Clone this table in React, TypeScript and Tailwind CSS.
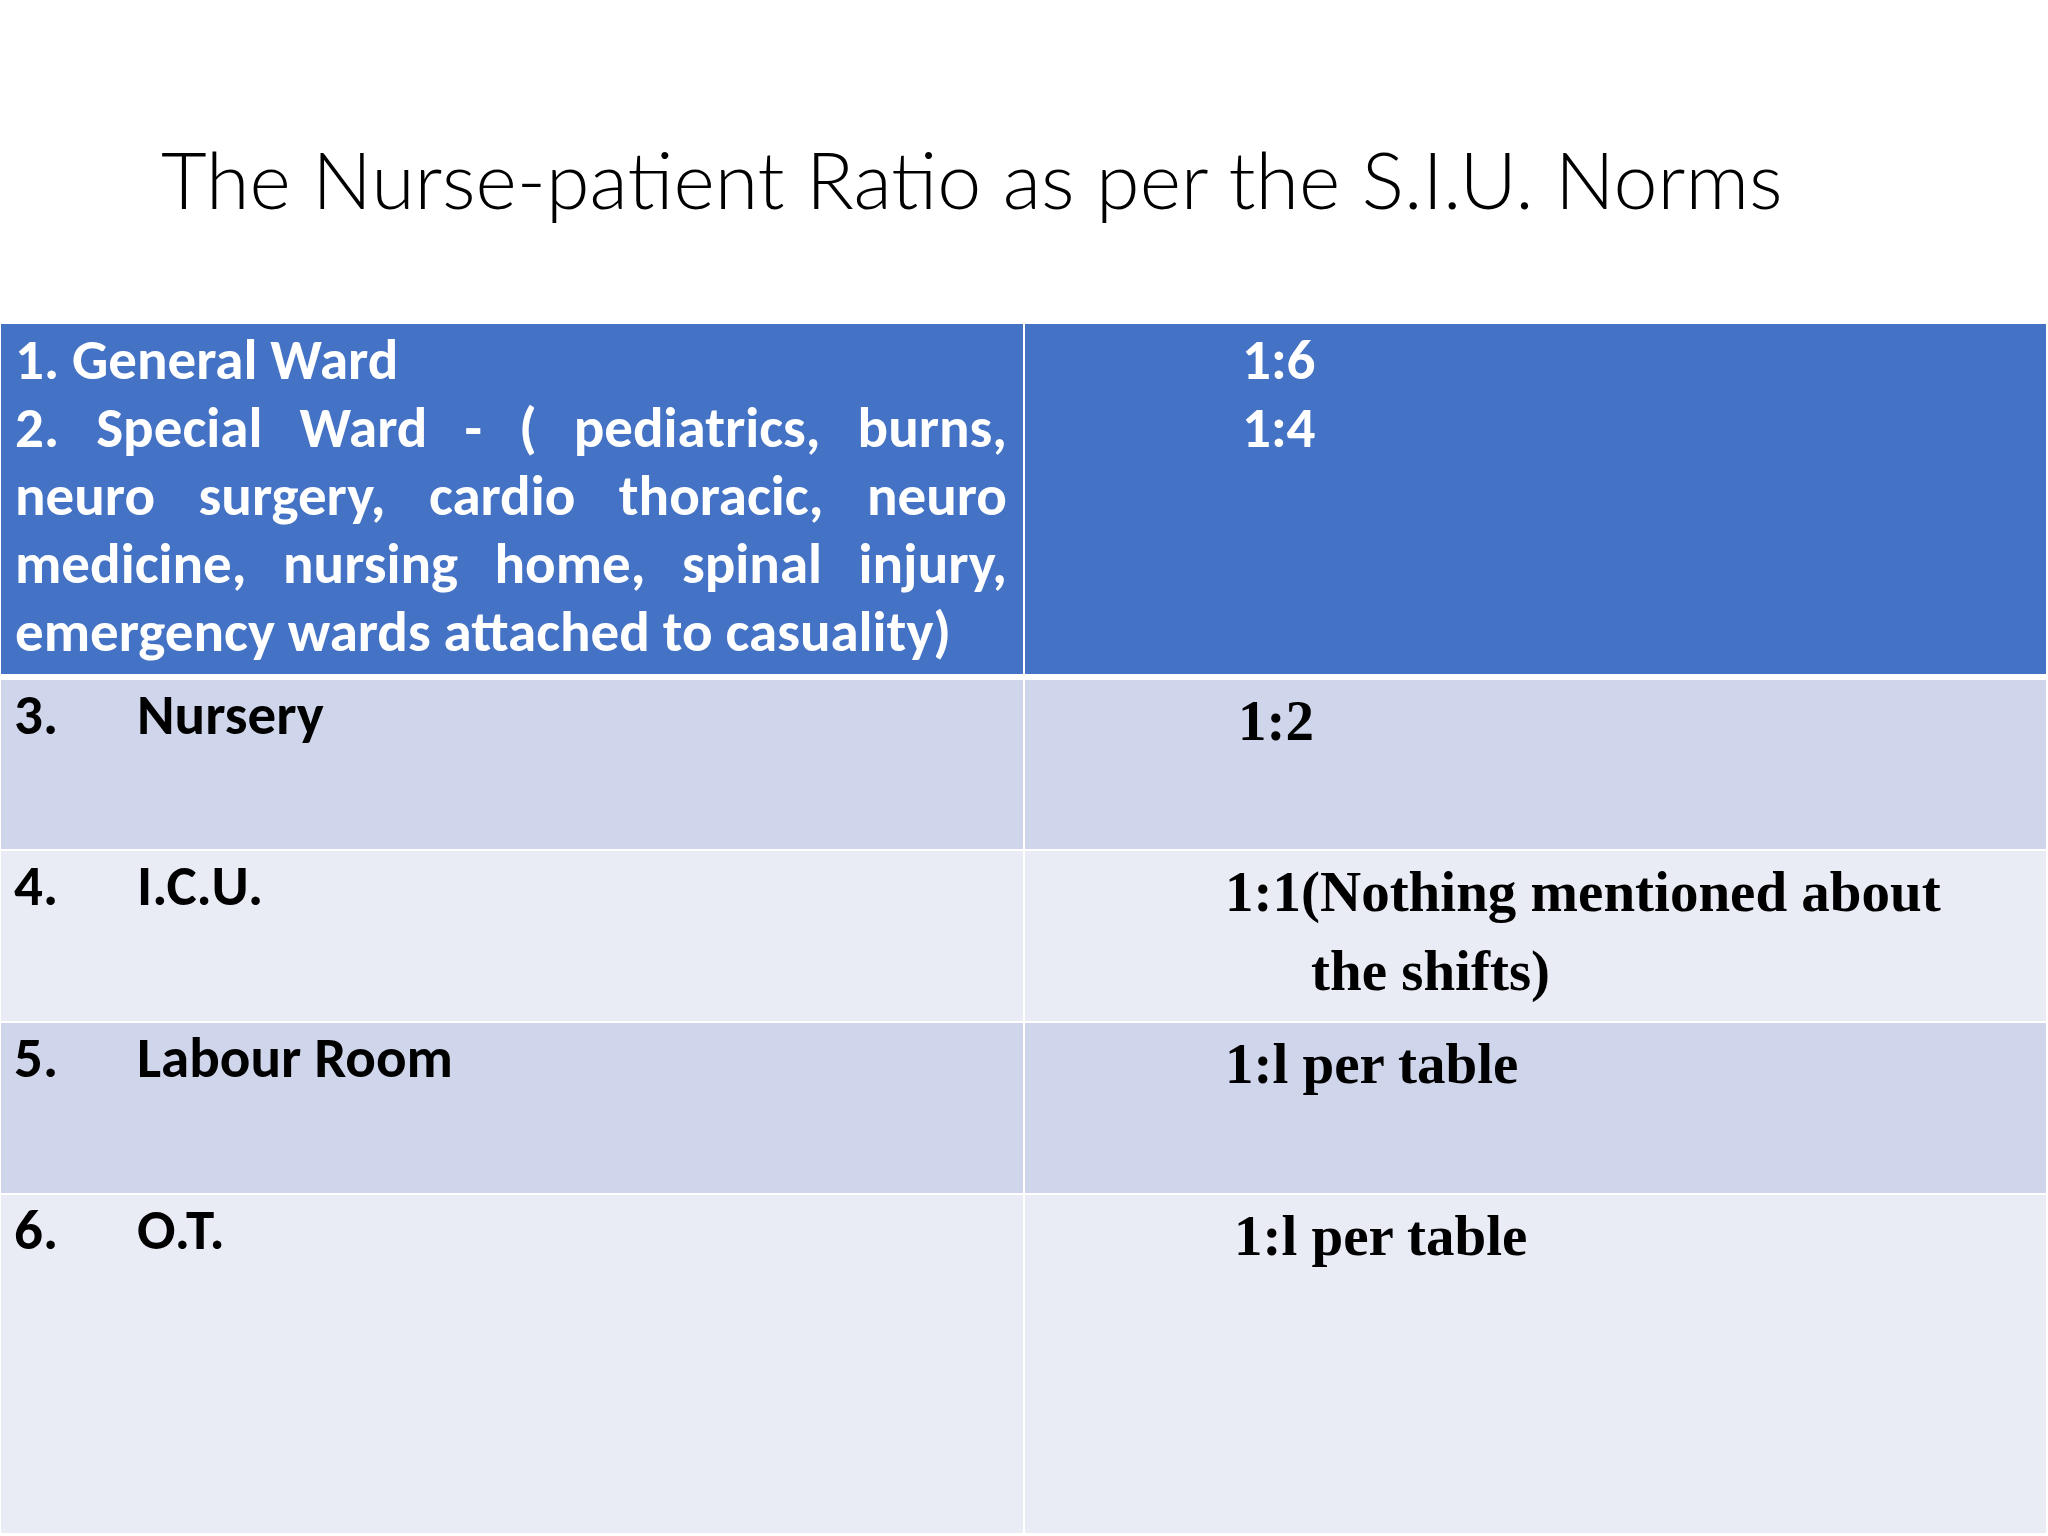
import React from "react";

const rows = [
  { n: "3.", label: "Nursery", value: ["1:2"], bg: "bg-[#CFD5EA]", h: "h-[169px]", pl: "pl-[213px]" },
  { n: "4.", label: "I.C.U.", value: ["1:1(Nothing mentioned about", "the shifts)"], bg: "bg-[#E9EBF5]", h: "h-[170px]", pl: "pl-[200px]" },
  { n: "5.", label: "Labour Room", value: ["1:l per table"], bg: "bg-[#CFD5EA]", h: "h-[170px]", pl: "pl-[200px]" },
  { n: "6.", label: "O.T.", value: ["1:l per table"], bg: "bg-[#E9EBF5]", h: "h-[338px]", pl: "pl-[209px]" },
];

export default function App() {
  return (
    <div className="w-[2048px] h-[1536px] bg-white overflow-hidden">
      <div className="h-[324px] pl-[161px] pt-[121px]">
        <h1 className="font-[Lato,sans-serif] font-light text-[79px] leading-[115px] text-black whitespace-nowrap">
          The Nurse-patient Ratio as per the S.I.U. Norms
        </h1>
      </div>
      <div className="ml-[1px] w-[2045px] flex flex-col">
        <div className="flex h-[350px] gap-[2px]">
          <div className="w-[1022px] bg-[#4472C4] pl-[14px] pr-[16px] pt-[2px] text-white font-bold text-[57px] leading-[68px] font-[Carlito,Lato,sans-serif]">
            <div>1. General Ward</div>
            <div className="text-justify [text-align-last:justify] whitespace-pre">2. Special Ward - ( pediatrics, burns,</div>
            <div className="text-justify [text-align-last:justify]">neuro surgery, cardio thoracic, neuro</div>
            <div className="text-justify [text-align-last:justify]">medicine, nursing home, spinal injury,</div>
            <div>emergency wards attached to casuality)</div>
          </div>
          <div className="flex-1 bg-[#4472C4] pl-[217px] pt-[2px] text-white font-bold text-[57px] leading-[68px] font-[Carlito,Lato,sans-serif]">
            <div>1:6</div>
            <div>1:4</div>
          </div>
        </div>
        {rows.map((r, i) => (
          <div key={r.n} className={`flex gap-[2px] ${r.h} ${i === 0 ? "mt-[6px]" : "mt-[2px]"}`}>
            <div className={`w-[1022px] ${r.bg} pl-[13px] pt-[1px] flex text-black font-bold text-[57px] leading-[68px] font-[Carlito,Lato,sans-serif]`}>
              <span className="w-[123px]">{r.n}</span>
              <span>{r.label}</span>
            </div>
            <div className={`flex-1 ${r.bg} ${r.pl} pt-[1px] text-black font-bold text-[57px] leading-[79px] font-['Liberation_Serif',serif]`}>
              {r.value.map((v, j) => (
                <div key={j} className={j > 0 ? "pl-[86px]" : ""}>
                  {v}
                </div>
              ))}
            </div>
          </div>
        ))}
      </div>
    </div>
  );
}
